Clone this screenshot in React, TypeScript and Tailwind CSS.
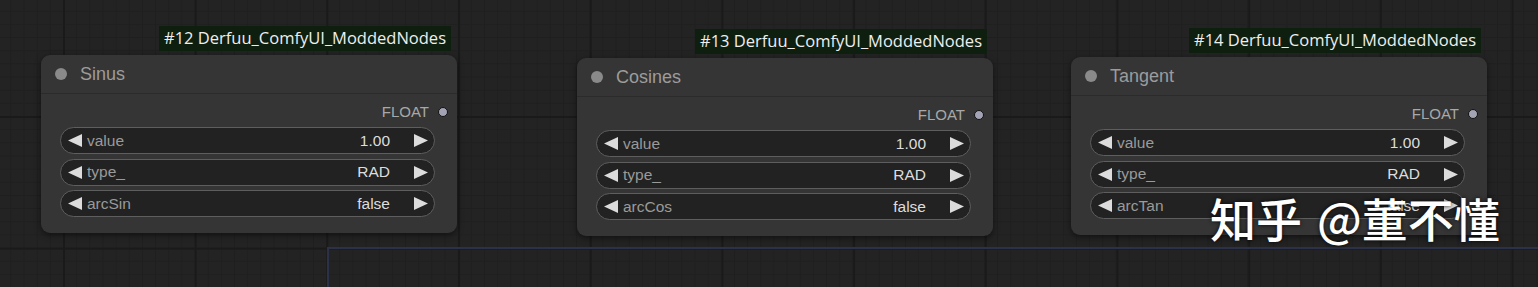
const nodes = [
  {
    id: 12,
    title: 'Sinus',
    arc: 'arcSin',
    left: 'left-[41px]',
    top: 'top-[55px]',
  },
  {
    id: 13,
    title: 'Cosines',
    arc: 'arcCos',
    left: 'left-[577px]',
    top: 'top-[58px]',
  },
  {
    id: 14,
    title: 'Tangent',
    arc: 'arcTan',
    left: 'left-[1071px]',
    top: 'top-[57px]',
  },
]

function Arrow({ dir }: { dir: 'left' | 'right' }) {
  return (
    <svg width="14" height="13" viewBox="0 0 14 13" className="shrink-0">
      <polygon
        points={dir === 'left' ? '14,0 14,13 0,6.5' : '0,0 0,13 14,6.5'}
        fill="#dcdcdc"
      />
    </svg>
  )
}

function Widget({ label, value }: { label: string; value: string }) {
  return (
    <div className="flex h-[27px] items-center rounded-full border border-[#5e5e5e] bg-[#222222] pl-[7px] pr-[6px] text-[15.5px] leading-none">
      <Arrow dir="left" />
      <span className="ml-[5px] text-[#9a9a9a]">{label}</span>
      <span className="ml-auto text-[#dddddd]">{value}</span>
      <span className="ml-[24px]">
        <Arrow dir="right" />
      </span>
    </div>
  )
}

function Node({ node }: { node: (typeof nodes)[number] }) {
  return (
    <div className={`absolute ${node.left} ${node.top} w-[416px]`}>
      <div className="absolute -top-[29px] right-[6px] flex h-[25px] items-center bg-[#0f1f0f] px-[5px] font-['Open_Sans',sans-serif] text-[16.5px] text-[#eeeeee]">
        #{node.id} Derfuu_ComfyUI_ModdedNodes
      </div>
      <div className="h-[178px] rounded-[9px] bg-[#353535] shadow-[0_2px_6px_rgba(0,0,0,0.5)]">
        <div className="flex h-[39px] items-center border-b border-[#2b2b2b] pl-[14px]">
          <div className="h-[12px] w-[12px] rounded-full bg-[#8a8a8a]" />
          <span className="ml-[13px] text-[18px] text-[#9c9c9c]">{node.title}</span>
        </div>
        <div className="px-[22px] pl-[19px] pt-[8px]">
          <div className="-mr-[13px] flex h-[20px] items-center justify-end">
            <span className="text-[15px] text-[#a8a8a8]">FLOAT</span>
            <div className="ml-[9px] h-[10px] w-[10px] rounded-full border border-[#111] bg-[#a3a3b6]" />
          </div>
          <div className="mt-[5px] flex flex-col gap-[4.5px]">
            <Widget label="value" value="1.00" />
            <Widget label="type_" value="RAD" />
            <Widget label={node.arc} value="false" />
          </div>
        </div>
      </div>
    </div>
  )
}

export default function App() {
  return (
    <div className="relative h-[287px] w-[1538px] overflow-hidden bg-[#232323] bg-[linear-gradient(to_right,#1a1a1a_2px,transparent_2px),linear-gradient(to_bottom,#1a1a1a_2px,transparent_2px),linear-gradient(to_right,#1f1f1f_1px,transparent_1px),linear-gradient(to_bottom,#1f1f1f_1px,transparent_1px)] bg-[length:131.7px_131.7px,131.7px_131.7px,13.17px_13.17px,13.17px_13.17px] bg-[position:63px_116px] font-['Liberation_Sans',Arial,sans-serif]">
      <div className="absolute bottom-0 left-[327px] right-0 top-[247px] border-l-2 border-t-2 border-[#2a3149]" />

      {nodes.map((node) => (
        <Node key={node.id} node={node} />
      ))}

      <div className="absolute left-[1210px] top-[194px] flex gap-[15px] font-['Noto_Sans_CJK_SC',sans-serif] text-[46px] leading-none font-medium text-white [text-shadow:0_0_4px_rgba(0,0,0,0.85)]">
        <span>知乎</span>
        <span>@董不懂</span>
      </div>
    </div>
  )
}
